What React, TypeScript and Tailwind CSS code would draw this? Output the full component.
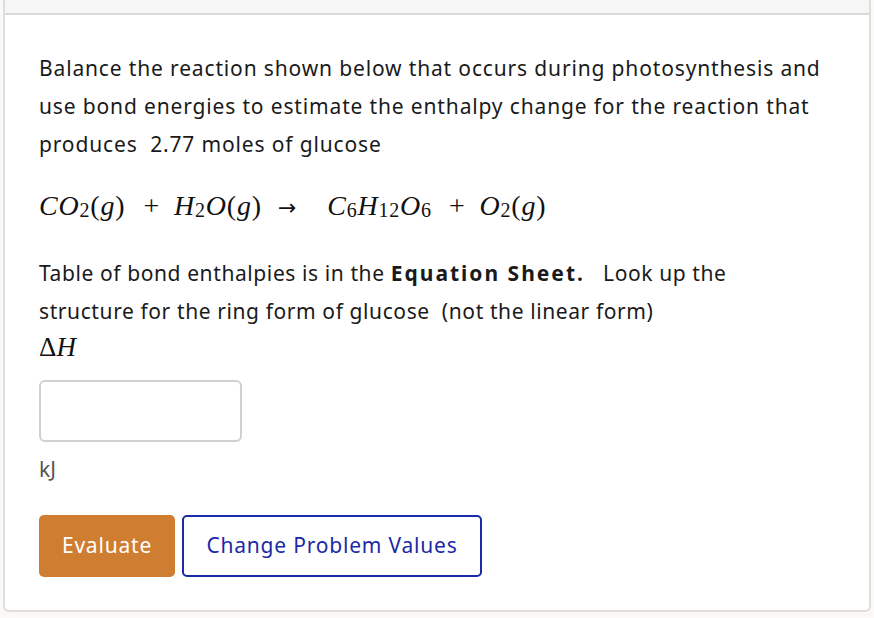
import React from "react";

const Sub = ({ children }: { children: React.ReactNode }) => (
    <span className="relative top-[2px] text-[20px]">{children}</span>
);

const Eq = () => {
    return (
        <p className="flex items-baseline text-[28px] leading-[38px] tracking-[0.8px] text-[#111]" style={{ fontFamily: '"Liberation Serif", serif' }}>
            <span className="italic">CO</span>
            <Sub>2</Sub>
            <span>(</span>
            <span className="italic">g</span>
            <span>)</span>
            <span className="ml-[18px] mr-[14px]">+</span>
            <span className="italic">H</span>
            <Sub>2</Sub>
            <span className="italic">O</span>
            <span>(</span>
            <span className="italic">g</span>
            <span>)</span>
            <span className="ml-[16px] mr-[30px] text-[22px]" style={{ fontFamily: '"DejaVu Sans", sans-serif' }}>→</span>
            <span className="italic">C</span>
            <Sub>6</Sub>
            <span className="italic">H</span>
            <Sub>12</Sub>
            <span className="italic">O</span>
            <Sub>6</Sub>
            <span className="ml-[17px] mr-[14px]">+</span>
            <span className="italic">O</span>
            <Sub>2</Sub>
            <span>(</span>
            <span className="italic">g</span>
            <span>)</span>
        </p>
    );
};

export default function App() {
    return (
        <div className="min-h-[618px] w-[874px] bg-[#fbf9f7] px-[3px] pb-[5px]" style={{ fontFamily: '"Noto Sans", sans-serif' }}>
            <div className="overflow-hidden rounded-b-[6px] border-x-2 border-b-2 border-[#e0dedb] bg-white">
                {/* top strip */}
                <div className="h-[15px] border-b-[2px] border-[#d9d9d9] bg-[#f6f6f6]" />

                <div className="px-[34px] pt-[34px] pb-[33px]">
                    <p className="text-[21px] leading-[38px] tracking-[0.85px] text-[#1a1a1a]">
                        Balance the reaction shown below that occurs during photosynthesis and
                        <br />
                        use bond energies to estimate the enthalpy change for the reaction that
                        <br />
                        produces&nbsp; 2.77 moles of glucose
                    </p>

                    <div className="mt-[24px]">
                        <Eq />
                    </div>

                    <p className="mt-[27px] text-[21px] leading-[38px] tracking-[0.6px] text-[#1a1a1a]">
                        Table of bond enthalpies is in the <b className="font-bold tracking-[2px]">Equation Sheet.</b>&nbsp;&nbsp; Look up the
                        <br />
                        structure for the ring form of glucose&nbsp; (not the linear form)
                    </p>
                    <p className="text-[27px] leading-[34px] text-[#111]" style={{ fontFamily: '"Liberation Serif", serif' }}>
                        Δ<span className="italic">H</span>
                    </p>

                    <div className="mt-[16px] h-[62px] w-[203px] rounded-[6px] border-2 border-[#d2d0cc] bg-white" />

                    <p className="mt-[12px] text-[21px] leading-[30px] text-[#555]">kJ</p>

                    <div className="mt-[31px] flex gap-[7px]">
                        <button className="h-[62px] w-[136px] rounded-[5px] bg-[#cf7d31] text-[21px] tracking-[0.8px] text-white">
                            Evaluate
                        </button>
                        <button className="h-[62px] w-[300px] rounded-[5px] border-2 border-[#1b2aa6] bg-white text-[21px] tracking-[0.8px] text-[#1b2aa6]">
                            Change Problem Values
                        </button>
                    </div>
                </div>
            </div>
        </div>
    );
}
